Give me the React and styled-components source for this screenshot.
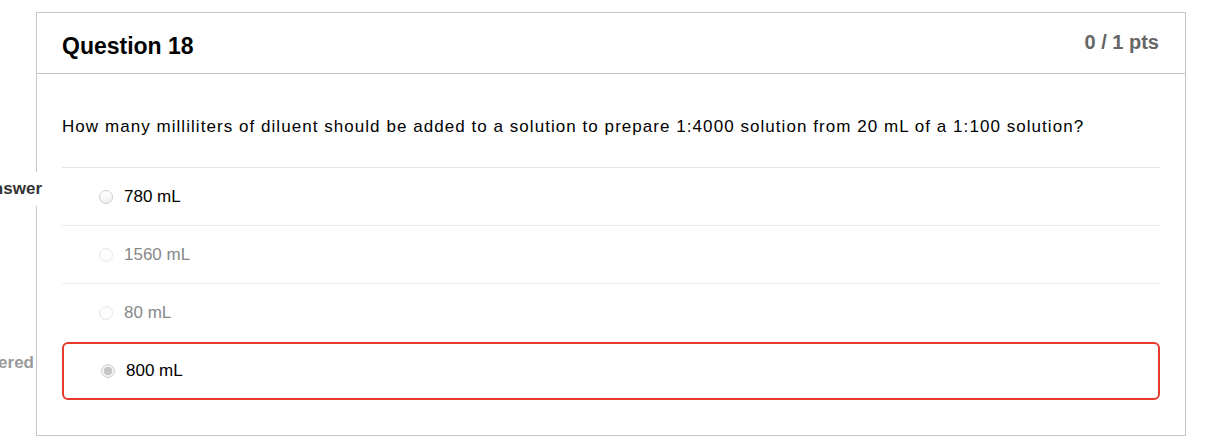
import React from "react";
import styled, { createGlobalStyle } from "styled-components";

const answers = [
  { id: 1, text: "780 mL", tone: "dark", label: "Correct Answer", labelTone: "dark" },
  { id: 2, text: "1560 mL", tone: "muted" },
  { id: 3, text: "80 mL", tone: "muted" },
  { id: 4, text: "800 mL", tone: "dark", picked: true, label: "You Answered", labelTone: "muted" },
];

export default function App() {
  return (
    <>
      <GlobalStyle />
      <QuestionCard>
        <Header>
          <Title>Question 18</Title>
          <Points>0 / 1 pts</Points>
        </Header>

        <Body>
          <QuestionText>
            How many milliliters of diluent should be added to a solution to
            prepare 1:4000 solution from 20 mL of a 1:100 solution?
          </QuestionText>

          <AnswerList>
            {answers.map((a) => (
              <AnswerRow key={a.id} $picked={a.picked}>
                {a.label && (
                  <ArrowLabel $tone={a.labelTone} $picked={a.picked}>
                    {a.label}
                  </ArrowLabel>
                )}
                <Radio $tone={a.tone} $checked={a.picked} />
                <AnswerText $tone={a.tone}>{a.text}</AnswerText>
              </AnswerRow>
            ))}
          </AnswerList>
        </Body>
      </QuestionCard>
    </>
  );
}

const GlobalStyle = createGlobalStyle`
  body {
    margin: 0;
    background: #ffffff;
    font-family: "Liberation Sans", Arial, sans-serif;
    overflow: hidden;
  }
`;

const QuestionCard = styled.div`
  box-sizing: border-box;
  margin: 12px 0 0 36px;
  width: 1150px;
  border: 1px solid #c7c7c7;
  background: #fff;
`;

const Header = styled.div`
  display: flex;
  justify-content: space-between;
  align-items: flex-start;
  height: 60px;
  padding: 0 26px 0 25px;
  border-bottom: 1px solid #c7c7c7;
`;

const Title = styled.h2`
  margin: 20px 0 0;
  font-size: 23px;
  font-weight: bold;
  color: #000;
`;

const Points = styled.div`
  margin-top: 18px;
  font-size: 20px;
  font-weight: bold;
  color: #666;
`;

const Body = styled.div`
  padding: 41px 25px 35px;
`;

const QuestionText = styled.p`
  margin: 0;
  padding-bottom: 28px;
  font-size: 17px;
  letter-spacing: 1.05px;
  line-height: 24px;
  color: #000;
  border-bottom: 1px solid #e6e6e6;
`;

const AnswerList = styled.div`
  display: flex;
  flex-direction: column;
`;

const AnswerRow = styled.div`
  position: relative;
  display: flex;
  align-items: center;
  box-sizing: border-box;
  height: 58px;
  padding-left: 37px;
  border-bottom: 1px solid #ececec;

  &:nth-last-child(2) {
    border-bottom: none;
  }

  ${(p) =>
    p.$picked &&
    `
    border: 2px solid #e8392c;
    border-radius: 6px;
    padding-left: 37px;
  `}
`;

const ArrowLabel = styled.div`
  position: absolute;
  top: ${(p) => (p.$picked ? "2px" : "4px")};
  right: calc(100% + ${(p) => (p.$picked ? "30px" : "20px")});
  height: 34px;
  display: flex;
  align-items: center;
  padding-left: 6px;
  background: #fff;
  white-space: nowrap;
  font-size: 17px;
  font-weight: bold;
  color: ${(p) => (p.$tone === "muted" ? "#9a9a9a" : "#333")};
`;

const Radio = styled.span`
  box-sizing: border-box;
  width: 14px;
  height: 14px;
  flex: 0 0 14px;
  border-radius: 50%;
  border: 1px solid
    ${(p) => (p.$checked ? "#cfcfcf" : p.$tone === "muted" ? "#e6e6e6" : "#cdcdcd")};
  background: ${(p) =>
    p.$checked
      ? "radial-gradient(circle, #c6c6c6 0 4px, #f2f2f2 4.5px)"
      : p.$tone === "muted"
      ? "#fdfdfd"
      : "linear-gradient(#ffffff, #f1f1f1)"};
`;

const AnswerText = styled.span`
  margin-left: 11px;
  font-size: 17px;
  color: ${(p) => (p.$tone === "muted" ? "#888" : "#000")};
`;
